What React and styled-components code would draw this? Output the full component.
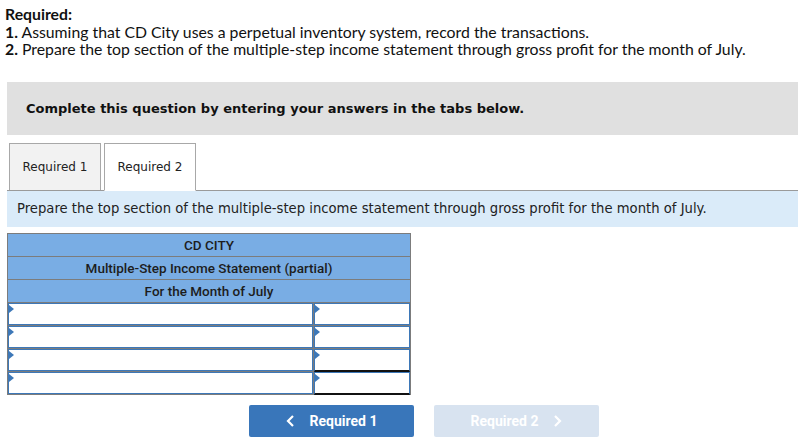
import React from 'react';
import styled, { createGlobalStyle } from 'styled-components';

const GlobalStyle = createGlobalStyle`
  html, body {
    margin: 0;
    padding: 0;
    background: #ffffff;
  }
  body {
    width: 798px;
    height: 444px;
    overflow: hidden;
  }
`;

const Page = styled.div`
  padding: 5px 0 0 0;
  color: #000;
`;

const Intro = styled.div`
  padding-left: 5px;
  font-family: Lato, 'Open Sans', sans-serif;
  font-size: 15.8px;
  line-height: 17.5px;
  color: #111;
  b {
    font-weight: 700;
  }
`;

const Banner = styled.div`
  margin: 24px 0 0 7px;
  height: 53px;
  background: #e0e0e0;
  display: flex;
  align-items: center;
  padding-left: 19px;
  font-family: 'DejaVu Sans', Verdana, sans-serif;
  font-weight: 700;
  font-size: 13px;
  color: #111;
`;

const TabBar = styled.div`
  margin: 8px 0 0 7px;
  display: flex;
  align-items: flex-end;
  border-bottom: 1px solid #9a9a9a;
  padding-left: 2px;
  gap: 3px;
  height: 47px;
`;

const Tab = styled.div`
  width: 90px;
  height: 46px;
  display: flex;
  align-items: center;
  justify-content: center;
  border: 1px solid #a8a8a8;
  border-bottom: ${(p) => (p.$active ? '1px solid #ffffff' : 'none')};
  margin-bottom: ${(p) => (p.$active ? '-1px' : '0')};
  background: ${(p) => (p.$active ? '#ffffff' : '#f2f2f2')};
  font-family: 'DejaVu Sans', Verdana, sans-serif;
  font-size: 12px;
  color: #222;
`;

const Prompt = styled.div`
  margin-left: 7px;
  height: 36px;
  background: #daebf9;
  display: flex;
  align-items: center;
  padding-left: 10px;
  font-family: 'DejaVu Sans', Verdana, sans-serif;
  font-size: 13.2px;
  color: #222;
`;

const Sheet = styled.table`
  margin: 6px 0 0 7px;
  width: 403px;
  border-collapse: collapse;
  table-layout: fixed;
`;

const HeadCell = styled.td`
  height: 22px;
  padding: 0;
  background: #79ade4;
  border: 1px solid #7c7c7c;
  text-align: center;
  font-family: Roboto, 'Liberation Sans', sans-serif;
  font-weight: 500;
  font-size: 13.5px;
  color: #1d1d1d;
`;

const Cell = styled.td`
  padding: 0;
  border: 1px solid #7c7c7c;
`;

const Entry = styled.div`
  position: relative;
  height: 20px;
  background: #fff;
  border: 1px solid #3d78b8;
  border-bottom: ${(p) => (p.$rule ? '2px solid #111' : '1px solid #3d78b8')};
  margin-bottom: ${(p) => (p.$rule ? '-1px' : '0')};
  &::before {
    content: '';
    position: absolute;
    left: 0;
    top: 1px;
    border-top: 4px solid transparent;
    border-bottom: 4px solid transparent;
    border-left: 5px solid #3d78b8;
  }
`;

const Nav = styled.div`
  display: flex;
  gap: 20px;
  margin: 10px 0 0 249px;
`;

const NavButton = styled.div`
  width: 165px;
  height: 32px;
  border-radius: 2px;
  background: ${(p) => (p.$disabled ? '#d8e3f0' : '#3976ba')};
  color: #ffffff;
  display: flex;
  align-items: center;
  justify-content: center;
  gap: 14px;
  font-family: Roboto, 'Liberation Sans', sans-serif;
  font-weight: 700;
  font-size: 14px;
  svg {
    width: 10px;
    height: 12px;
  }
`;

function Chevron({ dir }) {
  const d = dir === 'left' ? 'M7 1 L2 6 L7 11' : 'M3 1 L8 6 L3 11';
  return (
    <svg viewBox="0 0 10 12">
      <path d={d} fill="none" stroke="#fff" strokeWidth="2.2" />
    </svg>
  );
}

const rows = [
  { rule: false },
  { rule: false },
  { rule: true },
  { rule: true },
];

export default function App() {
  return (
    <>
      <GlobalStyle />
      <Page>
        <Intro>
          <div>
            <b>Required:</b>
          </div>
          <div>
            <b>1.</b> Assuming that CD City uses a perpetual inventory system, record the transactions.
          </div>
          <div>
            <b>2.</b> Prepare the top section of the multiple-step income statement through gross profit for the month of July.
          </div>
        </Intro>
        <Banner>Complete this question by entering your answers in the tabs below.</Banner>
        <TabBar>
          <Tab>Required 1</Tab>
          <Tab $active>Required 2</Tab>
        </TabBar>
        <Prompt>
          Prepare the top section of the multiple-step income statement through gross profit for the month of July.
        </Prompt>
        <Sheet>
          <colgroup>
            <col style={{ width: 306 }} />
            <col style={{ width: 97 }} />
          </colgroup>
          <tbody>
            <tr>
              <HeadCell colSpan={2}>CD CITY</HeadCell>
            </tr>
            <tr>
              <HeadCell colSpan={2}>Multiple-Step Income Statement (partial)</HeadCell>
            </tr>
            <tr>
              <HeadCell colSpan={2}>For the Month of July</HeadCell>
            </tr>
            {rows.map((r, i) => (
              <tr key={i}>
                <Cell>
                  <Entry />
                </Cell>
                <Cell>
                  <Entry $rule={r.rule} />
                </Cell>
              </tr>
            ))}
          </tbody>
        </Sheet>
        <Nav>
          <NavButton>
            <Chevron dir="left" />
            Required 1
          </NavButton>
          <NavButton $disabled>
            Required 2
            <Chevron dir="right" />
          </NavButton>
        </Nav>
      </Page>
    </>
  );
}
